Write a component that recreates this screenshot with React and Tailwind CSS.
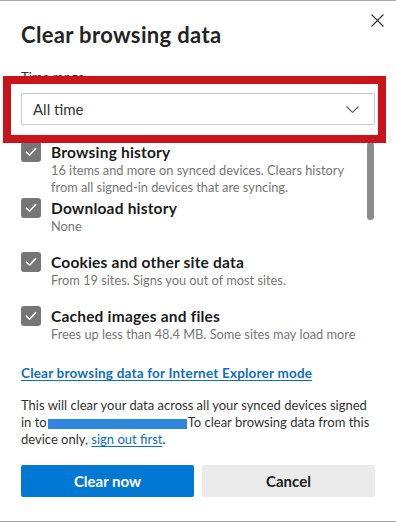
import React from 'react';

const items = [
  {
    title: 'Browsing history',
    desc: '16 items and more on synced devices. Clears history from all signed-in devices that are syncing.',
  },
  { title: 'Download history', desc: 'None' },
  { title: 'Cookies and other site data', desc: 'From 19 sites. Signs you out of most sites.' },
  { title: 'Cached images and files', desc: 'Frees up less than 48.4 MB. Some sites may load more' },
];

const Check = () => (
  <div className="w-5 h-5 shrink-0 rounded-[3px] bg-[#767676] flex items-center justify-center">
    <svg width="14" height="14" viewBox="0 0 14 14" fill="none">
      <path d="M2.5 7.2 L5.6 10.2 L11.6 3.6" stroke="white" strokeWidth="1.6" strokeLinecap="round" strokeLinejoin="round" />
    </svg>
  </div>
);

const App = () => {
  return (
    <div
      className="relative w-[396px] h-[522px] bg-white border-t border-b border-[#a8a8a8] overflow-hidden text-[#1b1b1b]"
      style={{ fontFamily: 'Lato, "Noto Sans", sans-serif' }}
    >
      <button className="absolute left-[369px] top-[11px] w-4 h-4 flex items-center justify-center">
        <svg width="13" height="13" viewBox="0 0 13 13">
          <path d="M0.5 0.5 L12.5 12.5 M12.5 0.5 L0.5 12.5" stroke="#333" strokeWidth="1.1" />
        </svg>
      </button>

      <div className="px-[21px] pt-[20px]">
        <h1 className="text-[22px] leading-[28px] font-bold tracking-[0.35px] text-[#242424]">Clear browsing data</h1>

        <div className="mt-[19px] text-[13px] leading-[18px] text-[#333]">Time range</div>
        <div className="mt-[7px] h-[32px] border border-[#c8c8c8] rounded-[2px] flex items-center justify-between pl-[11px] pr-[15px]">
          <span className="text-[15px] text-[#333]">All time</span>
          <svg width="13" height="7" viewBox="0 0 13 7" fill="none">
            <path d="M0.5 0.5 L6.5 6.3 L12.5 0.5" stroke="#555" strokeWidth="1.1" />
          </svg>
        </div>

        <div className="mt-[17px] flex gap-[3px] h-[218px] overflow-hidden">
          <div className="flex-1 flex flex-col">
            {items.map((it, i) => (
              <div key={it.title} className={`flex gap-[10px] min-h-[54px] ${i === 0 ? 'mb-[2px]' : ''}`}>
                <Check />
                <div className="min-w-0">
                  <div className="text-[15.5px] leading-[20px] font-bold tracking-[0.2px] text-[#1b1b1b]">{it.title}</div>
                  <div className={`text-[12.8px] leading-[17px] text-[#767676] ${i === 0 ? 'pr-[10px]' : ''}`}>{it.desc}</div>
                </div>
              </div>
            ))}
          </div>
          <div className="w-[7px] h-[78px] rounded-full bg-[#8b8b8b] mr-[1px]"></div>
        </div>

        <a className="inline-block text-[13.5px] leading-[17px] font-bold tracking-[0.2px] text-[#106ebe] underline underline-offset-[2px]">
          Clear browsing data for Internet Explorer mode
        </a>

        <p className="mt-[13px] text-[13px] leading-[17px] text-[#333]">
          This will clear your data across all your synced devices signed in to
          <span className="inline-block align-middle w-[139px] h-[10px] bg-[#2f86e0] mx-[1px]"></span>
          To clear browsing data from this device only,{' '}
          <a className="text-[#106ebe] underline underline-offset-[2px]">sign out first</a>.
        </p>

        <div className="mt-[17px] flex gap-[8px]">
          <button className="flex-1 h-[32px] rounded-[2px] bg-[#0078d4] text-white text-[15px] font-bold">Clear now</button>
          <button className="flex-1 h-[32px] rounded-[2px] bg-[#ebebeb] text-[#1b1b1b] text-[15px] font-bold">Cancel</button>
        </div>
      </div>

      <div className="absolute left-[3px] top-[75px] w-[383px] h-[67px] border-[8px] border-[#c8141a] pointer-events-none"></div>
    </div>
  );
};

export default App;
